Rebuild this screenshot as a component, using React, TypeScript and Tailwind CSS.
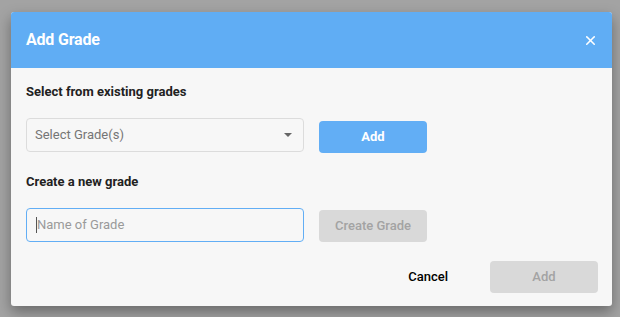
import { X } from "lucide-react";

export default function App() {
  return (
    <div
      className="w-[620px] h-[317px] bg-[#a3a3a3] pt-[12px] pl-[11px] overflow-hidden"
      style={{ fontFamily: "Roboto, 'Liberation Sans', sans-serif" }}
    >
      <div className="w-[601px] h-[294px] rounded-[3px] bg-[#f7f7f7] shadow-[0_6px_14px_rgba(0,0,0,0.35)] overflow-hidden flex flex-col">
        <div className="h-[56px] bg-[#60adf4] flex items-center justify-between pl-[15px] pr-[14px]">
          <h1 className="text-white text-[16px] font-bold tracking-[-0.2px]">Add Grade</h1>
          <X className="w-[15px] h-[15px] text-white" strokeWidth={2.5} />
        </div>

        <div className="flex flex-col px-[15px] pt-[16px]">
          <div className="text-[13px] font-bold text-[#222] leading-[16px]">Select from existing grades</div>
          <div className="flex items-start gap-[15px] mt-[18px]">
            <div className="w-[278px] h-[34px] border border-[#dcdcdc] rounded-[4px] bg-[#f7f7f7] flex items-center justify-between pl-[8px] pr-[11px]">
              <span className="text-[13px] text-[#757575]">Select Grade(s)</span>
              <span className="w-0 h-0 border-l-[4px] border-r-[4px] border-t-[4px] border-l-transparent border-r-transparent border-t-[#666]" />
            </div>
            <button className="mt-[3px] w-[108px] h-[32px] rounded-[4px] bg-[#62aef5] text-white text-[13px] font-bold">
              Add
            </button>
          </div>

          <div className="text-[13px] font-bold text-[#222] leading-[16px] mt-[21px]">Create a new grade</div>
          <div className="flex items-start gap-[15px] mt-[18px]">
            <div className="w-[278px] h-[34px] border border-[#62aef5] rounded-[4px] bg-[#f7f7f7] flex items-center pl-[9px]">
              <span className="w-px h-[16px] bg-[#555]" />
              <span className="text-[13px] text-[#9a9a9a]">Name of Grade</span>
            </div>
            <button className="mt-[2px] w-[108px] h-[32px] rounded-[4px] bg-[#d9d9d9] text-[#a3a3a3] text-[13px] font-medium">
              Create Grade
            </button>
          </div>

          <div className="flex justify-end items-center mt-[19px]">
            <button className="h-[32px] px-[4px] mr-[38px] text-[13px] font-medium text-black">Cancel</button>
            <button className="w-[108px] h-[32px] rounded-[4px] bg-[#d9d9d9] text-[#a3a3a3] text-[13px] font-medium -mr-[1px]">
              Add
            </button>
          </div>
        </div>
      </div>
    </div>
  );
}
